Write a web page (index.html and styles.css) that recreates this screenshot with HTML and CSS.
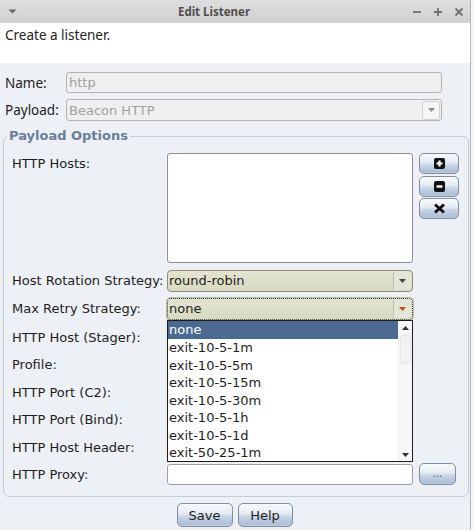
FILE: index.html
```html
<!DOCTYPE html>
<html>
<head>
<meta charset="utf-8">
<title>Edit Listener</title>
<link rel="stylesheet" href="styles.css">
</head>
<body>
<div class="window">
  <div class="titlebar">
    <span class="tb-menu"><svg width="9" height="5" viewBox="0 0 9 5"><path d="M0.5 0.5 L8.5 0.5 L4.5 4.5 Z" fill="#6a6a6a"/></svg></span>
    <span class="tb-title">Edit Listener</span>
    <span class="tb-controls">
      <svg width="10" height="10" viewBox="0 0 10 10"><path d="M1 5 H9" stroke="#707070" stroke-width="1.8"/></svg>
      <svg width="10" height="10" viewBox="0 0 10 10"><path d="M1 5 H9 M5 1 V9" stroke="#707070" stroke-width="1.8"/></svg>
      <svg width="10" height="10" viewBox="0 0 10 10"><path d="M1.5 1.5 L8.5 8.5 M8.5 1.5 L1.5 8.5" stroke="#707070" stroke-width="1.8"/></svg>
    </span>
  </div>

  <div class="intro">Create a listener.</div>

  <div class="basics">
    <span class="blabel">Name:</span>
    <div class="field field-disabled">http</div>
    <span class="blabel">Payload:</span>
    <div class="field field-disabled combo-disabled">
      <span class="combo-text">Beacon HTTP</span>
      <span class="dis-arrow"><svg width="7" height="4" viewBox="0 0 7 4"><path d="M0 0 H7 L3.5 4 Z" fill="#8a8a8a"/></svg></span>
    </div>
  </div>

  <fieldset class="options">
    <legend>Payload Options</legend>
    <div class="opt-grid">
      <span class="olabel">HTTP Hosts:</span>
      <div class="hosts-list"></div>
      <div class="tools">
        <button class="nbtn tbtn"><svg width="11" height="11" viewBox="0 0 11 11"><rect x="0" y="0" width="11" height="11" rx="2" fill="#111"/><path d="M5.5 2.5 V8.5 M2.5 5.5 H8.5" stroke="#fff" stroke-width="2.2"/></svg></button>
        <button class="nbtn tbtn"><svg width="11" height="11" viewBox="0 0 11 11"><rect x="0" y="0" width="11" height="11" rx="2" fill="#111"/><path d="M2.5 5.5 H8.5" stroke="#fff" stroke-width="2.4"/></svg></button>
        <button class="nbtn tbtn"><svg width="13" height="11" viewBox="0 0 13 11"><path d="M2 1.5 L11 9.5 M11 1.5 L2 9.5" stroke="#111" stroke-width="3"/></svg></button>
      </div>

      <span class="olabel">Host Rotation Strategy:</span>
      <div class="combo">
        <span class="combo-text">round-robin</span>
        <span class="combo-arrow"><svg width="7" height="4" viewBox="0 0 7 4"><path d="M0 0 H7 L3.5 4 Z" fill="#444"/></svg></span>
      </div>
      <span></span>

      <span class="olabel">Max Retry Strategy:</span>
      <div class="combo combo-focus">
        <span class="combo-text">none</span>
        <span class="combo-arrow"><svg width="7" height="4" viewBox="0 0 7 4"><path d="M0 0 H7 L3.5 4 Z" fill="#c9411f"/></svg></span>
        <div class="popup">
          <ul class="popup-list">
            <li class="sel">none</li>
            <li>exit-10-5-1m</li>
            <li>exit-10-5-5m</li>
            <li>exit-10-5-15m</li>
            <li>exit-10-5-30m</li>
            <li>exit-10-5-1h</li>
            <li>exit-10-5-1d</li>
            <li>exit-50-25-1m</li>
          </ul>
          <div class="sbar">
            <span class="sb-up"><svg width="7" height="4" viewBox="0 0 7 4"><path d="M0 4 H7 L3.5 0 Z" fill="#333"/></svg></span>
            <span class="sb-thumb"></span>
            <span class="sb-track"></span>
            <span class="sb-down"><svg width="7" height="4" viewBox="0 0 7 4"><path d="M0 0 H7 L3.5 4 Z" fill="#333"/></svg></span>
          </div>
        </div>
      </div>
      <span></span>

      <span class="olabel">HTTP Host (Stager):</span>
      <div class="field"></div>
      <span></span>

      <span class="olabel">Profile:</span>
      <div class="field"></div>
      <span></span>

      <span class="olabel">HTTP Port (C2):</span>
      <div class="field"></div>
      <span></span>

      <span class="olabel">HTTP Port (Bind):</span>
      <div class="field"></div>
      <span></span>

      <span class="olabel">HTTP Host Header:</span>
      <div class="field"></div>
      <span></span>

      <span class="olabel">HTTP Proxy:</span>
      <div class="field"></div>
      <div class="tools">
        <button class="nbtn dots">...</button>
      </div>
    </div>
  </fieldset>

  <div class="actions">
    <button class="nbtn act save">Save</button>
    <button class="nbtn act help">Help</button>
  </div>
</div>
</body>
</html>
```

FILE: styles.css
```css
* {
  box-sizing: border-box;
}

html, body {
  margin: 0;
  padding: 0;
}

body {
  width: 474px;
  height: 530px;
  overflow: hidden;
  background: #f4f5f7;
  font-family: "DejaVu Sans", sans-serif;
  font-size: 13px;
  color: #1e1e1e;
}

.window {
  width: 471px;
  height: 530px;
  background: #edf0f5;
  border-right: 1px solid #b3b7bf;
  display: flex;
  flex-direction: column;
}

/* title bar */
.titlebar {
  height: 23px;
  flex: none;
  display: flex;
  align-items: center;
  background: linear-gradient(#dedede, #d0d0d0);
}

.tb-menu {
  width: 24px;
  display: flex;
  justify-content: center;
  padding-left: 1px;
}

.tb-title {
  flex: 1;
  text-align: center;
  font-family: "Noto Sans", sans-serif;
  font-weight: bold;
  font-size: 11.5px;
  color: #505050;
}

.tb-controls {
  width: 66px;
  display: flex;
  gap: 11px;
  padding-left: 8px;
}

/* intro */
.intro {
  height: 40px;
  flex: none;
  background: #fff;
  padding: 3px 5px 0;
  font-family: "Noto Sans", sans-serif;
  font-size: 13.5px;
  line-height: 18px;
  color: #222;
}

/* name / payload */
.basics {
  margin-top: 9px;
  padding-left: 5px;
  display: grid;
  grid-template-columns: 61px 376px;
  grid-template-rows: 21px 22px;
  row-gap: 6px;
  align-items: center;
}

.blabel {
  font-family: "Noto Sans", sans-serif;
  font-size: 13.5px;
  color: #222;
}

.field {
  height: 100%;
  background: #fff;
  border: 1px solid #9ea3ab;
  border-radius: 3px;
  padding-left: 2px;
  line-height: 19px;
}

.field-disabled {
  background: #f0efef;
  border-color: #b4b4b4;
  color: #a0a0a0;
}

.combo-disabled {
  display: flex;
  align-items: center;
  padding-right: 1px;
}

.combo-text {
  flex: 1;
}

.dis-arrow {
  width: 18px;
  height: 19px;
  border: 1px solid #d2d2d2;
  border-radius: 3px;
  display: flex;
  align-items: center;
  justify-content: center;
  background: #f6f5f5;
}

/* payload options */
.options {
  margin: 7px 0 0 3px;
  width: 466px;
  min-width: 0;
  border: 1px solid #c6cbd5;
  border-radius: 6px;
  padding: 9px 0 11px 8px;
}

.options legend {
  font-weight: bold;
  font-size: 13px;
  line-height: 16px;
  color: #6b7e9b;
  padding: 0 2px;
  margin-left: -5px;
}

.opt-grid {
  display: grid;
  grid-template-columns: 155px 246px 46px;
  grid-template-rows: 110px 22px 22px repeat(6, 21px);
  row-gap: 6.5px;
}

.olabel {
  line-height: 22px;
  color: #1e1e1e;
  white-space: nowrap;
}

.hosts-list {
  background: #fff;
  border: 1px solid #8d9199;
  border-radius: 3px;
}

.tools {
  padding-left: 6px;
  display: flex;
  flex-direction: column;
  gap: 1.5px;
}

.nbtn {
  font-family: "DejaVu Sans", sans-serif;
  font-size: 13px;
  color: #1e1e1e;
  border: 1px solid #7f8ea5;
  border-radius: 5px;
  background: linear-gradient(#f8fafc 0%, #e6ecf3 42%, #c9d5e5 58%, #aebfd7 92%, #c4d1e2 100%);
  padding: 0;
  display: flex;
  align-items: center;
  justify-content: center;
}

.tbtn {
  width: 40px;
  height: 21px;
}

.dots {
  width: 37px;
  height: 23px;
  margin-top: -1px;
  font-size: 10px;
  color: #3c4a5e;
  padding-bottom: 2px;
}

/* combo boxes */
.combo {
  position: relative;
  display: flex;
  align-items: center;
  border: 1px solid #8a8d7e;
  border-radius: 4px;
  background: linear-gradient(#e2e4d0, #d8dbc2);
  padding-left: 1px;
  line-height: 20px;
}

.combo-focus {
  border: 1px dotted #3a3a3a;
  box-shadow: 0 0 0 1px #b7baa8;
}

.combo-arrow {
  align-self: stretch;
  width: 18px;
  margin: 1px 1px 1px 0;
  border-left: 1px solid #bdc0ad;
  background: #e3e5d6;
  display: flex;
  align-items: center;
  justify-content: center;
  border-radius: 0 3px 3px 0;
}

/* popup list */
.popup {
  position: absolute;
  top: 21px;
  left: -1px;
  width: 246px;
  height: 142px;
  z-index: 10;
  background: #fff;
  border: 1px solid #1c1c1c;
  display: flex;
}

.popup-list {
  list-style: none;
  margin: 0;
  padding: 0;
  flex: 1;
}

.popup-list li {
  height: 17.5px;
  line-height: 17.5px;
  padding-left: 1px;
  color: #1e1e1e;
  white-space: nowrap;
}

.popup-list li.sel {
  background: #4b6a92;
  color: #fff;
  height: 18px;
}

.sbar {
  width: 14px;
  display: flex;
  flex-direction: column;
  background: #f7f7f7;
  border-left: 1px solid #efefef;
}

.sb-up, .sb-down {
  height: 13px;
  display: flex;
  align-items: center;
  justify-content: center;
}

.sb-thumb {
  height: 29px;
  margin: 1px 1px 0;
  border: 1px solid #e6e6e6;
  border-radius: 3px;
  background: #f2f2f2;
}

.sb-track {
  flex: 1;
}

/* actions */
.actions {
  margin-top: 6px;
  display: flex;
  justify-content: center;
  gap: 5px;
  padding-right: 1px;
}

.act {
  height: 24px;
}

.save {
  width: 56px;
}

.help {
  width: 55px;
}
```
